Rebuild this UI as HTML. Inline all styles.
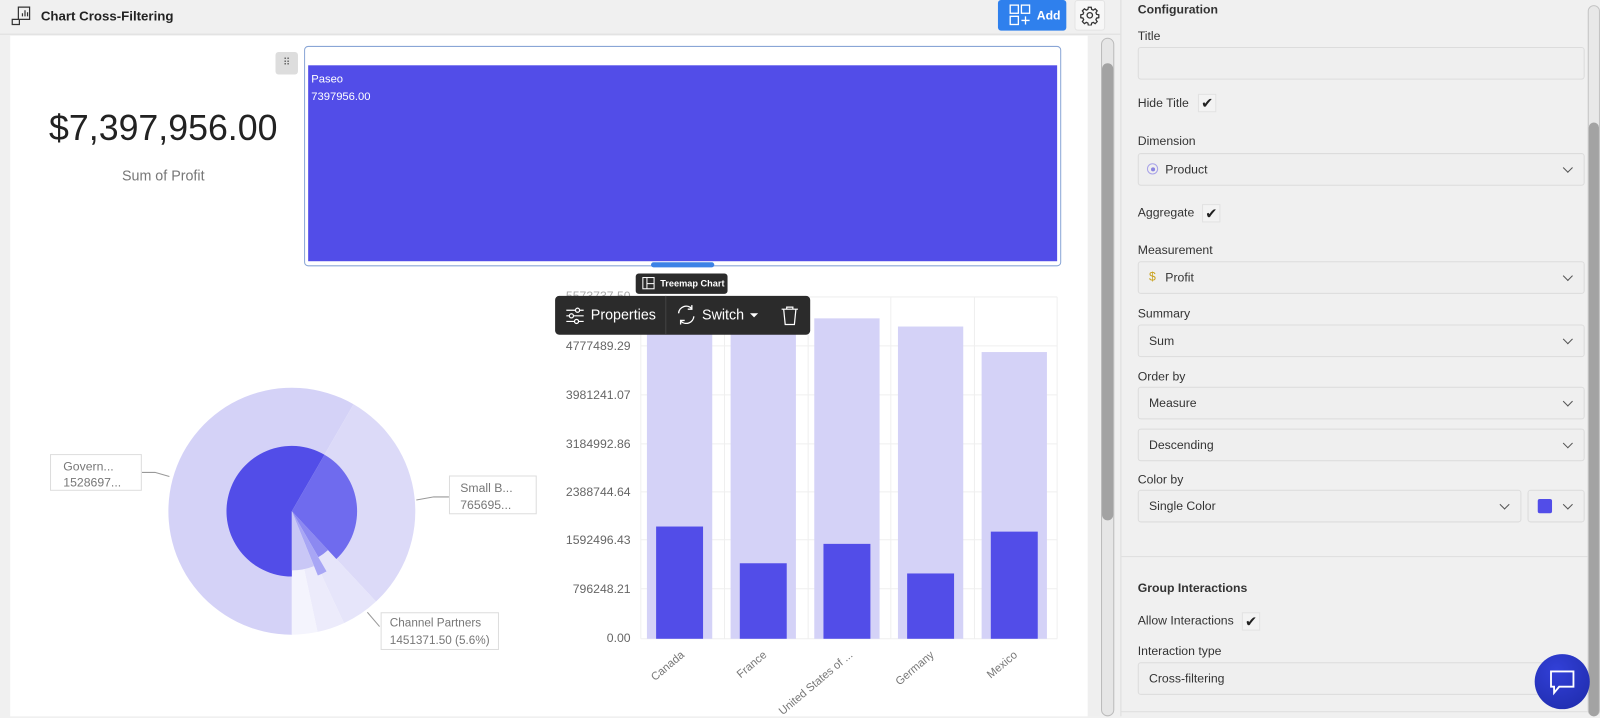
<!DOCTYPE html>
<html><head><meta charset="utf-8"><style>
*{box-sizing:border-box;margin:0;padding:0}
html,body{width:1600px;height:716px;overflow:hidden;background:#f0f0f0;font-family:"Liberation Sans",Arial,sans-serif}
#root{position:absolute;left:0;top:0;width:1568px;height:702px;transform:scale(1.0204);transform-origin:0 0}
.a{position:absolute}
.lbl{position:absolute;left:1115px;font-size:12px;color:#333}
.sel{position:absolute;left:1115px;width:438px;height:32px;border:1px solid #dcdcdc;border-radius:3px;background:#efefef;font-size:12px;color:#333;padding-left:10px;line-height:30px;white-space:nowrap}
.chev{position:absolute;right:12px;top:10px;width:7px;height:7px;border-right:1.3px solid #555;border-bottom:1.3px solid #555;transform:rotate(45deg)}
.cb{position:absolute;width:18px;height:18px;border:1px solid #e2e2e2;background:#f3f3f3;font-size:14px;line-height:17px;text-align:center;color:#222}
.yl{position:absolute;right:950px;font-size:12px;color:#666;text-align:right}
.xl{position:absolute;font-size:11px;color:#777;transform:rotate(-40deg);transform-origin:right top;white-space:nowrap}
</style></head><body><div id="root">
<div class="a" style="left:0;top:0;width:1098px;height:34px;background:#f0f0f0;border-bottom:1px solid #ddd"></div>
<svg class="a" style="left:11px;top:5px" width="20" height="20" viewBox="0 0 20 20" fill="none" stroke="#333" stroke-width="1.2"><path d="M7 2h11v12H7z M1 14h7v5H1z" /><path d="M11 11V8M13.5 11V5M16 11V7"/></svg>
<div class="a" style="left:40px;top:8px;font-size:13px;font-weight:bold;color:#222">Chart Cross-Filtering</div>
<div class="a" style="left:978px;top:0;width:67px;height:30px;background:#2f80ed;border-radius:3px;color:#fff;font-size:12px;font-weight:bold;line-height:30px;padding-left:38px">Add</div>
<svg class="a" style="left:989px;top:4px" width="22" height="22" viewBox="0 0 22 22" fill="none" stroke="#fff" stroke-width="1.3"><rect x="1" y="1" width="8" height="8"/><rect x="12" y="1" width="8" height="8"/><rect x="1" y="12" width="8" height="8"/><path d="M16 12v8M12 16h8"/></svg>
<div class="a" style="left:1053px;top:0;width:30px;height:30px;background:#f7f7f7;border:1px solid #e4e4e4;border-radius:3px"></div>
<svg class="a" style="left:1058px;top:5px" width="20" height="20" viewBox="0 0 24 24" fill="none" stroke="#333" stroke-width="1.5"><circle cx="12" cy="12" r="3.2"/><path d="M10.3 2.5h3.4l.5 2.6 1.9.8 2.2-1.5 2.4 2.4-1.5 2.2.8 1.9 2.6.5v3.4l-2.6.5-.8 1.9 1.5 2.2-2.4 2.4-2.2-1.5-1.9.8-.5 2.6h-3.4l-.5-2.6-1.9-.8-2.2 1.5-2.4-2.4 1.5-2.2-.8-1.9-2.6-.5v-3.4l2.6-.5.8-1.9-1.5-2.2 2.4-2.4 2.2 1.5 1.9-.8z"/></svg>
<div class="a" style="left:10px;top:35px;width:1056px;height:667px;background:#fff"></div>
<div class="a" style="left:1066px;top:35px;width:12px;height:667px;background:#efefef"></div>
<div class="a" style="left:1079px;top:37px;width:13px;height:665px;border:1px solid #bbb;border-radius:7px;background:#e6e6e6"></div>
<div class="a" style="left:1080px;top:62px;width:11px;height:448px;border-radius:6px;background:#a3a3a3"></div>
<div class="a" style="left:20px;top:106px;width:280px;text-align:center;font-size:35px;color:#222">$7,397,956.00</div>
<div class="a" style="left:20px;top:164px;width:280px;text-align:center;font-size:14px;color:#777">Sum of Profit</div>
<div class="a" style="left:270px;top:51px;width:22px;height:22px;background:#ddd;border-radius:3px;color:#666;font-size:10px;text-align:center;line-height:22px">⠿</div>
<div class="a" style="left:298px;top:45px;width:742px;height:216px;border:1px solid #8aa6d6;border-radius:4px;background:#fff"></div>
<div class="a" style="left:302px;top:64px;width:734px;height:192px;background:#524de8;color:#fff;font-size:11px;padding:6px 3px;line-height:17px">Paseo<br>7397956.00</div>
<div class="a" style="left:638px;top:257px;width:62px;height:5px;background:#3b82e6;border-radius:3px"></div>
<svg class="a" style="left:0;top:0" width="1066" height="702">
<g stroke="#efefef" stroke-width="1">
<path d="M628 291H1036M628 339H1036M628 387H1036M628 435H1036M628 482H1036M628 529H1036M628 577H1036M628 626H1036"/>
<path d="M628 291V626M710 291V626M792 291V626M873 291V626M955 291V626M1036 291V626"/>
</g>
<g fill="#d4d2f7"><rect x="634" y="300" width="64" height="326"/><rect x="716" y="300" width="64" height="326"/><rect x="798" y="312" width="64" height="314"/><rect x="880" y="320" width="64" height="306"/><rect x="962" y="345" width="64" height="281"/></g>
<g fill="#524de8"><rect x="643" y="516" width="46" height="110"/><rect x="725" y="552" width="46" height="74"/><rect x="807" y="533" width="46" height="93"/><rect x="889" y="562" width="46" height="64"/><rect x="971" y="521" width="46" height="105"/></g>
<path d="M286,501 L286,622 A121,121 0 1 1 346.5,396.2 Z" fill="#d4d2f7"/>
<path d="M286,501 L346.5,396.2 A121,121 0 0 1 368.5,589.5 Z" fill="#dcdaf8"/>
<path d="M286,501 L368.5,589.5 A121,121 0 0 1 337.1,610.7 Z" fill="#e6e5fa"/>
<path d="M286,501 L337.1,610.7 A121,121 0 0 1 311.2,619.3 Z" fill="#ecebfb"/>
<path d="M286,501 L311.2,619.3 A121,121 0 0 1 286,622 Z" fill="#f4f4fd"/>
<path d="M286,501 L286,565 A64,64 0 1 1 318,445.6 Z" fill="#524de8"/>
<path d="M286,501 L318,445.6 A64,64 0 0 1 329.6,547.8 Z" fill="#6f6bee"/>
<path d="M286,501 L321.5,539 A52,52 0 0 1 312,546 Z" fill="#8c89f1"/>
<path d="M286,501 L320,559.9 A68,68 0 0 1 311.5,564 Z" fill="#a8a6f5"/>
<path d="M286,501 L307.7,554.8 A58,58 0 0 1 286,559 Z" fill="#c9c7f6"/>
<g stroke="#999" fill="none" stroke-width="1"><path d="M139 463H152L166 467"/><path d="M408 490L425 487H440"/><path d="M360 600L372 614"/></g>
</svg>
<div class="yl" style="top:283px;color:#aaa">5573737.50</div>
<div class="yl" style="top:332px">4777489.29</div>
<div class="yl" style="top:380px">3981241.07</div>
<div class="yl" style="top:428px">3184992.86</div>
<div class="yl" style="top:475px">2388744.64</div>
<div class="yl" style="top:522px">1592496.43</div>
<div class="yl" style="top:570px">796248.21</div>
<div class="yl" style="top:618px">0.00</div>
<div class="xl" style="right:902px;top:636px">Canada</div>
<div class="xl" style="right:822px;top:636px">France</div>
<div class="xl" style="right:738px;top:636px">United States of ...</div>
<div class="xl" style="right:658px;top:636px">Germany</div>
<div class="xl" style="right:576px;top:636px">Mexico</div>
<div class="a" style="left:49px;top:445px;width:90px;height:36px;border:1px solid #ddd;background:#fff;font-size:12px;color:#777;padding:3px 0 0 12px;line-height:16px">Govern...<br>1528697...</div>
<div class="a" style="left:440px;top:466px;width:86px;height:38px;border:1px solid #ddd;background:#fff;font-size:12px;color:#777;padding:3px 0 0 10px;line-height:17px">Small B...<br>765695...</div>
<div class="a" style="left:373px;top:600px;width:116px;height:37px;border:1px solid #ddd;background:#fff;font-size:11.5px;color:#777;padding:2px 0 0 8px;line-height:17px;white-space:nowrap">Channel Partners<br>1451371.50 (5.6%)</div>
<div class="a" style="left:623px;top:268px;width:90px;height:20px;background:#2b2b2b;border-radius:3px;color:#fff;font-size:9px;font-weight:bold;line-height:20px;padding-left:24px">Treemap Chart</div>
<svg class="a" style="left:629px;top:271px" width="13" height="13" viewBox="0 0 13 13" fill="none" stroke="#fff" stroke-width="1"><rect x="1" y="1" width="11" height="11"/><path d="M5 1v11M5 7h7"/></svg>
<div class="a" style="left:544px;top:290px;width:250px;height:38px;background:#2b2b2b;border-radius:4px"></div>
<div class="a" style="left:652px;top:290px;width:1px;height:38px;background:#444"></div>
<svg class="a" style="left:554px;top:300px" width="19" height="19" viewBox="0 0 19 19" fill="none" stroke="#fff" stroke-width="1.2"><path d="M1 4h17M1 9.5h17M1 15h17"/><circle cx="12" cy="4" r="2" fill="#2b2b2b"/><circle cx="6" cy="9.5" r="2" fill="#2b2b2b"/><circle cx="11" cy="15" r="2" fill="#2b2b2b"/></svg>
<div class="a" style="left:579px;top:300px;font-size:14px;color:#fff">Properties</div>
<svg class="a" style="left:662px;top:298px" width="21" height="21" viewBox="0 0 21 21" fill="none" stroke="#fff" stroke-width="1.3"><path d="M3 9a7.5 7.5 0 0 1 13-4.5M18 12a7.5 7.5 0 0 1-13 4.5"/><path d="M16 1v4h-4M5 20v-4h4"/></svg>
<div class="a" style="left:688px;top:300px;font-size:14px;color:#fff">Switch</div>
<div class="a" style="left:735px;top:307px;border-left:4px solid transparent;border-right:4px solid transparent;border-top:4px solid #fff"></div>
<svg class="a" style="left:765px;top:299px" width="18" height="20" viewBox="0 0 18 20" fill="none" stroke="#fff" stroke-width="1.2"><path d="M1 4h16M6 4V2h6v2M3 4l1.5 15h9L15 4"/></svg>
<div class="a" style="left:1098px;top:0;width:470px;height:702px;border-left:1px solid #ddd;background:#f0f0f0"></div>
<div class="a" style="left:1556px;top:5px;width:12px;height:697px;border:1px solid #c4c4c4;border-radius:6px;background:#e8e8e8"></div>
<div class="a" style="left:1557px;top:120px;width:10px;height:582px;background:#a3a3a3;border-radius:5px"></div>
<div class="lbl" style="top:2px;font-weight:bold">Configuration</div>
<div class="lbl" style="top:28px">Title</div>
<div class="sel" style="top:46px;height:32px"></div>
<div class="lbl" style="top:94px">Hide Title</div><div class="cb" style="left:1174px;top:92px">✔</div>
<div class="lbl" style="top:131px">Dimension</div>
<div class="sel" style="top:150px;padding-left:26px">Product<span class="chev"></span></div>
<div class="a" style="left:1124px;top:160px;width:11px;height:11px;border:1.2px solid #a9a3e8;border-radius:50%"><div class="a" style="left:2.5px;top:2.5px;width:4px;height:4px;background:#8a83e0;border-radius:50%"></div></div>
<div class="lbl" style="top:201px">Aggregate</div><div class="cb" style="left:1178px;top:200px">✔</div>
<div class="lbl" style="top:238px">Measurement</div>
<div class="sel" style="top:256px;padding-left:26px">Profit<span class="chev"></span></div>
<div class="a" style="left:1126px;top:264px;font-size:12px;color:#c9a21f">$</div>
<div class="lbl" style="top:300px">Summary</div>
<div class="sel" style="top:318px">Sum<span class="chev"></span></div>
<div class="lbl" style="top:362px">Order by</div>
<div class="sel" style="top:379px">Measure<span class="chev"></span></div>
<div class="sel" style="top:420px">Descending<span class="chev"></span></div>
<div class="lbl" style="top:463px">Color by</div>
<div class="sel" style="top:480px;width:376px">Single Color<span class="chev"></span></div>
<div class="sel" style="top:480px;left:1497px;width:56px"><span class="chev"></span></div>
<div class="a" style="left:1507px;top:489px;width:14px;height:14px;background:#524de8;border-radius:2px"></div>
<div class="a" style="left:1099px;top:545px;width:457px;height:1px;background:#ddd"></div>
<div class="lbl" style="top:569px;font-weight:bold">Group Interactions</div>
<div class="lbl" style="top:601px">Allow Interactions</div><div class="cb" style="left:1217px;top:600px">✔</div>
<div class="lbl" style="top:631px">Interaction type</div>
<div class="sel" style="top:649px">Cross-filtering</div>
<div class="a" style="left:1099px;top:697px;width:457px;height:1px;background:#ddd"></div>
<div class="a" style="left:1504px;top:641px;width:54px;height:54px;border-radius:50%;background:radial-gradient(circle at 40% 30%,#3240d8,#1d2aa8)"></div>
<svg class="a" style="left:1516px;top:653px" width="30" height="30" viewBox="0 0 30 30" fill="none" stroke="#fff" stroke-width="1.8"><path d="M4 5h22v15H12l-5 6v-6H4z"/></svg>
</div></body></html>
